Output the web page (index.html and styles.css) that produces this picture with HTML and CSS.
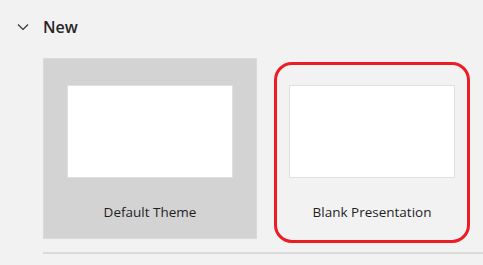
FILE: index.html
```html
<!DOCTYPE html>
<html>
<head>
<meta charset="utf-8">
<link rel="stylesheet" href="styles.css">
</head>
<body>
<div class="page">
  <div class="header">
    <svg class="chevron" width="12" height="8" viewBox="0 0 12 8"><path d="M1 1.5 L6 6.5 L11 1.5" fill="none" stroke="#333" stroke-width="1.2"/></svg>
    <span class="title">New</span>
  </div>
  <div class="section">
    <div class="cards">
      <div class="card selected">
        <div class="thumb"></div>
        <div class="label">Default Theme</div>
      </div>
      <div class="card">
        <div class="thumb"></div>
        <div class="label">Blank Presentation</div>
        <div class="highlight"></div>
      </div>
    </div>
    <div class="divider"></div>
  </div>
</div>
</body>
</html>
```
FILE: styles.css
```css
html, body {
  margin: 0;
  padding: 0;
  background: #f2f2f2;
}
body {
  font-family: "Open Sans", "Noto Sans", sans-serif;
  color: #262626;
  width: 483px;
  height: 265px;
  overflow: hidden;
}
.header {
  height: 58px;
  display: flex;
  align-items: center;
  padding-left: 17px;
  box-sizing: border-box;
  padding-bottom: 5px;
}
.chevron {
  display: block;
  margin-right: 14px;
}
.title {
  font-size: 16px;
  font-weight: 600;
  color: #262626;
}
.section {
  padding-left: 43px;
}
.cards {
  display: flex;
  gap: 8px;
}
.card {
  position: relative;
  width: 214px;
  height: 181px;
  box-sizing: border-box;
  display: flex;
  flex-direction: column;
  align-items: center;
  padding-top: 27px;
}
.card.selected {
  background: #d3d3d3;
  border: 1px solid #dadada;
  padding-top: 26px;
}
.thumb {
  width: 166px;
  height: 93px;
  box-sizing: border-box;
  background: #fff;
  border: 1px solid #e0e0e0;
}
.label {
  margin-top: 25px;
  font-size: 13.5px;
  color: #1f1f1f;
}
.highlight {
  position: absolute;
  left: 9px;
  top: 4px;
  width: 196px;
  height: 181px;
  box-sizing: border-box;
  border: 3.5px solid #ed1c24;
  border-radius: 18px;
}
.divider {
  margin-top: 13px;
  height: 2px;
  background: #dadada;
}
```
